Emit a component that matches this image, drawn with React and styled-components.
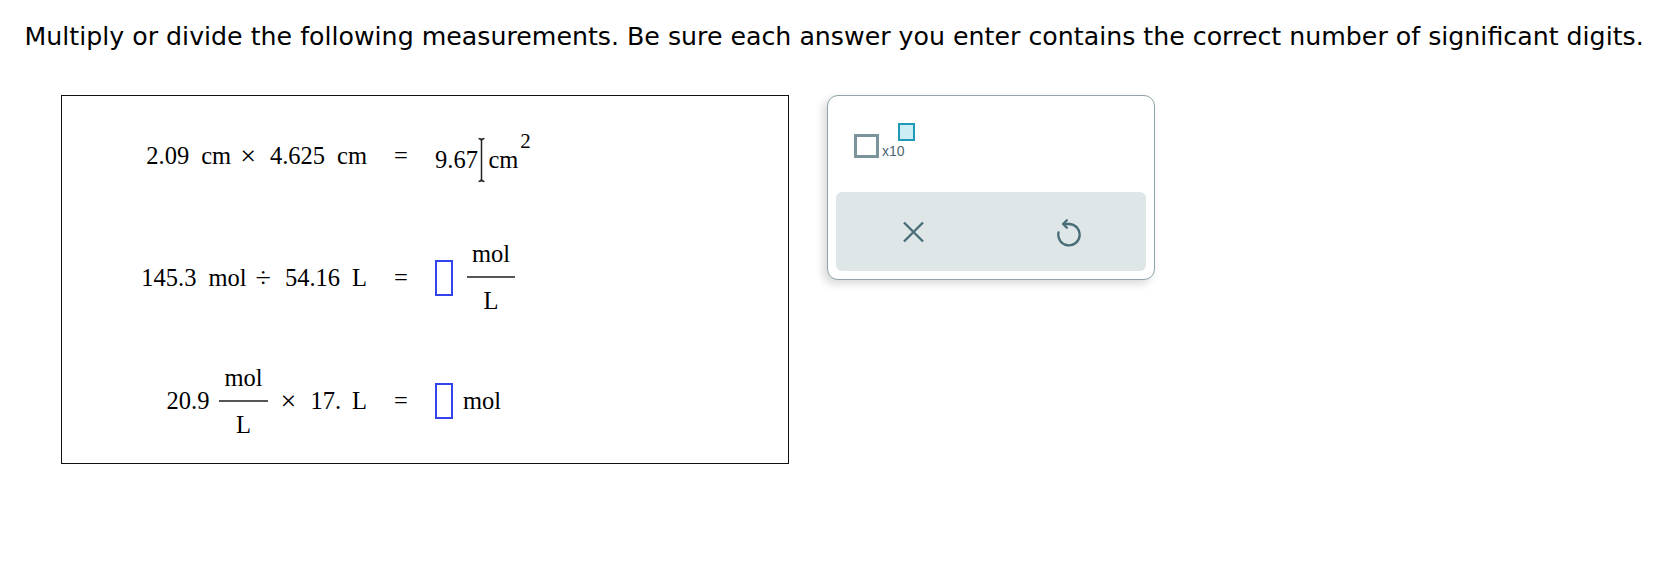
import React from 'react';
import styled, { createGlobalStyle } from 'styled-components';

const GlobalStyle = createGlobalStyle`
  html, body {
    margin: 0;
    padding: 0;
    background: #fff;
  }
`;

const Page = styled.div`
  padding: 22px 0 0 24.5px;
`;

const Title = styled.p`
  margin: 0;
  font-family: "DejaVu Sans", Verdana, sans-serif;
  font-size: 25.25px;
  color: #000;
  white-space: nowrap;
`;

const Content = styled.div`
  display: flex;
  align-items: flex-start;
  gap: 38px;
  margin-top: 44px;
  padding-left: 36.5px;
`;

const QuestionBox = styled.div`
  width: 726px;
  border: 1px solid #111;
  display: flex;
  flex-direction: column;
  font-family: "Liberation Serif", "Times New Roman", serif;
  font-size: 24.5px;
  color: #000;
`;

const Row = styled.div`
  display: grid;
  grid-template-columns: 305px 68px 1fr;
  height: ${(p) => p.$h}px;
`;

const Left = styled.div`
  display: flex;
  align-items: center;
  justify-content: flex-end;
`;

const Equals = styled.div`
  display: flex;
  align-items: center;
  justify-content: center;
`;

const Right = styled.div`
  display: flex;
  align-items: center;
`;

const Token = styled.span`
  margin-left: ${(p) => p.$ml || 0}px;
  margin-right: ${(p) => p.$mr || 0}px;
  white-space: nowrap;
`;

const Op = styled.span`
  font-size: 28px;
  line-height: 1;
  margin: 0 14px 0 9px;
`;

const Fraction = styled.span`
  display: inline-flex;
  flex-direction: column;
  align-items: center;
  margin-left: ${(p) => p.$ml || 0}px;
  margin-right: ${(p) => p.$mr || 0}px;
`;

const Num = styled.span`
  padding: 0 5px;
  margin-bottom: 8px;
`;

const Bar = styled.span`
  align-self: stretch;
  height: 2px;
  background: #555;
`;

const Den = styled.span`
  margin-top: 9px;
`;

const InputBox = styled.span`
  display: inline-block;
  box-sizing: border-box;
  width: 18px;
  height: 36px;
  border: 2px solid #3344ee;
  background: #fff;
  margin-right: ${(p) => p.$mr || 0}px;
`;

const Answer = styled.div`
  display: flex;
  align-items: baseline;
`;

const Filled = styled.span`
  position: relative;
  padding-right: 3.5px;
`;

const Cursor = styled.svg`
  position: absolute;
  right: -3.5px;
  top: 50%;
  transform: translateY(-50%);
`;

const UnitSup = styled.span`
  display: inline-flex;
  align-items: flex-start;
  margin-left: 7px;
`;

const UnitText = styled.span`
  margin-top: 7.5px;
`;

const Sup = styled.span`
  font-size: 21px;
  margin-top: -9px;
  margin-left: 2px;
`;

const Panel = styled.div`
  width: 326px;
  height: 183px;
  border: 1px solid #8ea3aa;
  border-radius: 11px;
  background: #fff;
  box-shadow: -4px 4px 8px rgba(0, 0, 0, 0.15);
  display: flex;
  flex-direction: column;
`;

const TopArea = styled.div`
  height: 96px;
  box-sizing: border-box;
  padding: 27px 0 0 26px;
`;

const X10Button = styled.button`
  display: inline-flex;
  align-items: flex-end;
  height: 35px;
  padding: 0;
  border: 0;
  background: none;
  cursor: pointer;
`;

const BigSquare = styled.span`
  width: 25px;
  height: 24px;
  box-sizing: border-box;
  border: 3px solid #7b949b;
  background: #fff;
`;

const X10Text = styled.span`
  font-family: "Liberation Sans", Arial, sans-serif;
  font-size: 14px;
  line-height: 1;
  color: #4a6670;
  margin-left: 3px;
`;

const SmallSquare = styled.span`
  align-self: flex-start;
  width: 17px;
  height: 18px;
  box-sizing: border-box;
  border: 2.5px solid #1f9ab6;
  background: #cdedf4;
  margin-left: -7px;
`;

const ActionBar = styled.div`
  display: grid;
  grid-template-columns: 1fr 1fr;
  height: 79px;
  margin: 0 8px;
  border-radius: 6px;
  background: #dfe6e8;
`;

const ActionButton = styled.button`
  display: flex;
  align-items: center;
  justify-content: center;
  border: 0;
  background: none;
  padding: 0;
  cursor: pointer;
`;

const IBeam = () => (
  <Cursor width="7" height="45" viewBox="0 0 7 45">
    <path
      d="M0.5 1 Q3.5 1 3.5 3.5 Q3.5 1 6.5 1 M3.5 3.5 V41.5 M0.5 44 Q3.5 44 3.5 41.5 Q3.5 44 6.5 44"
      fill="none"
      stroke="#222"
      strokeWidth="1.5"
    />
  </Cursor>
);

const CloseIcon = () => (
  <svg width="23" height="22" viewBox="0 0 23 22">
    <path d="M2 1.5 L21 20.5 M21 1.5 L2 20.5" stroke="#4a6e78" strokeWidth="2.4" fill="none" />
  </svg>
);

const UndoIcon = () => (
  <svg width="26" height="30" viewBox="0 0 24 28">
    <path
      d="M12 6.5 A10 10 0 1 1 2.2 14.4"
      fill="none"
      stroke="#4a6e78"
      strokeWidth="2.2"
      strokeLinecap="round"
    />
    <path
      d="M12 6.5 H6.5 M10 3 L6.5 6.5 L10 10"
      fill="none"
      stroke="#4a6e78"
      strokeWidth="2.2"
      strokeLinecap="round"
      strokeLinejoin="round"
    />
  </svg>
);

const App = () => (
  <>
    <GlobalStyle />
    <Page>
      <Title>
        Multiply or divide the following measurements. Be sure each answer you enter contains the correct number of significant digits.
      </Title>
      <Content>
        <QuestionBox>
          <Row $h={120}>
            <Left>
              <Token>2.09</Token>
              <Token $ml={12}>cm</Token>
              <Op>×</Op>
              <Token>4.625</Token>
              <Token $ml={12}>cm</Token>
            </Left>
            <Equals>=</Equals>
            <Right>
              <Answer>
                <Filled>
                  9.67
                  <IBeam />
                </Filled>
                <UnitSup>
                  <UnitText>cm</UnitText>
                  <Sup>2</Sup>
                </UnitSup>
              </Answer>
            </Right>
          </Row>
          <Row $h={123}>
            <Left>
              <Token>145.3</Token>
              <Token $ml={12}>mol</Token>
              <Op>÷</Op>
              <Token>54.16</Token>
              <Token $ml={12}>L</Token>
            </Left>
            <Equals>=</Equals>
            <Right>
              <InputBox $mr={14} />
              <Fraction>
                <Num>mol</Num>
                <Bar />
                <Den>L</Den>
              </Fraction>
            </Right>
          </Row>
          <Row $h={124}>
            <Left>
              <Token>20.9</Token>
              <Fraction $ml={10} $mr={4}>
                <Num>mol</Num>
                <Bar />
                <Den>L</Den>
              </Fraction>
              <Op>×</Op>
              <Token>17.</Token>
              <Token $ml={11}>L</Token>
            </Left>
            <Equals>=</Equals>
            <Right>
              <InputBox $mr={10} />
              <Token>mol</Token>
            </Right>
          </Row>
        </QuestionBox>
        <Panel>
          <TopArea>
            <X10Button aria-label="times ten to the power">
              <BigSquare />
              <X10Text>x10</X10Text>
              <SmallSquare />
            </X10Button>
          </TopArea>
          <ActionBar>
            <ActionButton aria-label="clear">
              <CloseIcon />
            </ActionButton>
            <ActionButton aria-label="undo">
              <UndoIcon />
            </ActionButton>
          </ActionBar>
        </Panel>
      </Content>
    </Page>
  </>
);

export default App;
